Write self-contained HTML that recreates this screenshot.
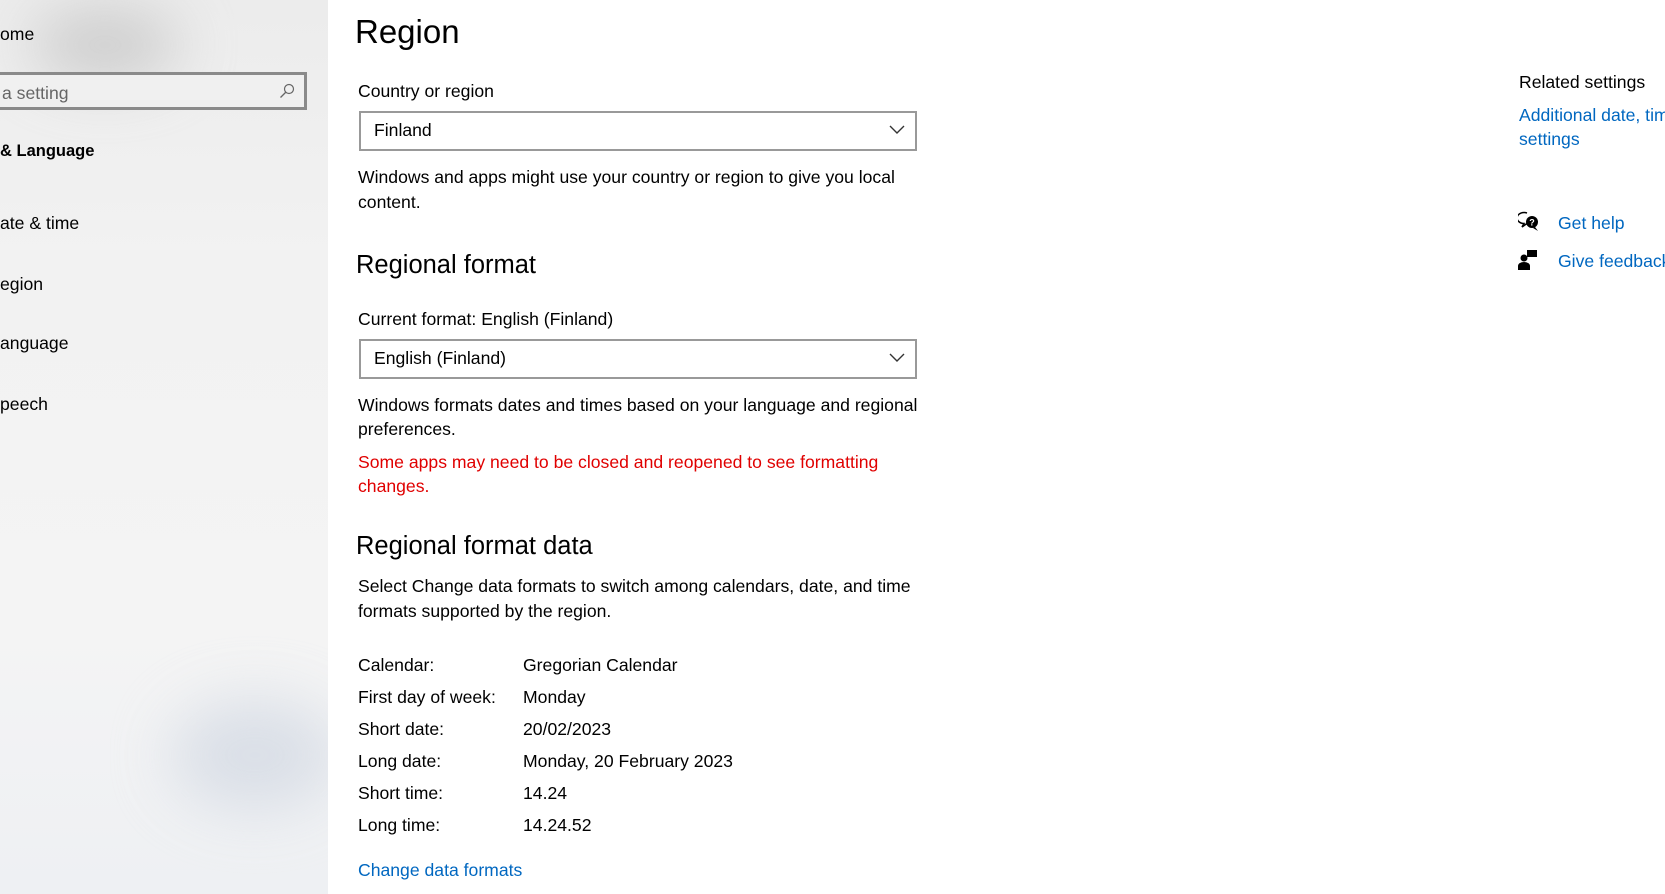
<!DOCTYPE html>
<html><head><meta charset="utf-8"><style>
*{margin:0;padding:0;box-sizing:border-box}
html,body{width:1665px;height:894px;overflow:hidden}
body{background:#fff;font-family:"Segoe UI","Liberation Sans",sans-serif;color:#000;position:relative;font-size:17.6px}
.a{position:absolute;white-space:nowrap;line-height:24px}
#side{position:absolute;left:0;top:0;width:328px;height:894px;background:linear-gradient(180deg,#ececec,#f2f2f2 30%,#f4f4f4 70%,#eef0f3);overflow:hidden}
.blob{position:absolute;border-radius:50%;filter:blur(30px)}
.dd{position:absolute;left:359px;width:558px;height:40px;border:2px solid #999;background:#fff}
.dd span{position:absolute;left:13px;top:7px;font-size:17.6px}
.dd svg{position:absolute;right:10px;top:12px}
.blue{color:#0067c0}
.red{color:#e00000}
</style></head><body>
<div id="side">
<div class="blob" style="left:30px;top:10px;width:150px;height:70px;background:#bdbdbd;opacity:.7"></div>
<div class="blob" style="left:170px;top:700px;width:170px;height:110px;background:#d4dae4;opacity:.8"></div>
<div class="a" style="left:0;top:22px;font-size:17.6px">ome</div>
<div style="position:absolute;left:-4px;top:72px;width:311px;height:38px;border:3px solid #8a8a8a;background:#f0f0f0"></div>
<div class="a" style="left:2px;top:81px;font-size:17.6px;color:#666">a setting</div>
<svg style="position:absolute;left:279px;top:83px" width="16" height="16" viewBox="0 0 16 16"><circle cx="10" cy="6" r="4.5" fill="none" stroke="#666" stroke-width="1.2"/><path d="M7 9L1.5 14.5" stroke="#666" stroke-width="1.3"/></svg>
<div class="a" style="left:0;top:139px;font-size:16.5px;font-weight:bold">&amp; Language</div>
<div class="a" style="left:0;top:211px">ate &amp; time</div>
<div class="a" style="left:0;top:272px">egion</div>
<div class="a" style="left:0;top:331px">anguage</div>
<div class="a" style="left:0;top:392px">peech</div>
</div>

<div class="a" style="left:355px;top:12px;font-size:33px;line-height:40px">Region</div>
<div class="a" style="left:358px;top:79px">Country or region</div>
<div class="dd" style="top:111px"><span>Finland</span><svg width="16" height="10" viewBox="0 0 16 10"><path d="M1 1l7 7 7-7" fill="none" stroke="#333" stroke-width="1.4"/></svg></div>
<div class="a" style="left:358px;top:165px">Windows and apps might use your country or region to give you local</div>
<div class="a" style="left:358px;top:190px">content.</div>
<div class="a" style="left:356px;top:250px;font-size:25.5px;line-height:30px">Regional format</div>
<div class="a" style="left:358px;top:307px">Current format: English (Finland)</div>
<div class="dd" style="top:339px"><span>English (Finland)</span><svg width="16" height="10" viewBox="0 0 16 10"><path d="M1 1l7 7 7-7" fill="none" stroke="#333" stroke-width="1.4"/></svg></div>
<div class="a" style="left:358px;top:393px">Windows formats dates and times based on your language and regional</div>
<div class="a" style="left:358px;top:417px">preferences.</div>
<div class="a red" style="left:358px;top:450px">Some apps may need to be closed and reopened to see formatting</div>
<div class="a red" style="left:358px;top:474px">changes.</div>
<div class="a" style="left:356px;top:531px;font-size:25.5px;line-height:30px">Regional format data</div>
<div class="a" style="left:358px;top:574px">Select Change data formats to switch among calendars, date, and time</div>
<div class="a" style="left:358px;top:599px">formats supported by the region.</div>
<div class="a" style="left:358px;top:653px">Calendar:</div><div class="a" style="left:523px;top:653px">Gregorian Calendar</div>
<div class="a" style="left:358px;top:685px">First day of week:</div><div class="a" style="left:523px;top:685px">Monday</div>
<div class="a" style="left:358px;top:717px">Short date:</div><div class="a" style="left:523px;top:717px">20/02/2023</div>
<div class="a" style="left:358px;top:749px">Long date:</div><div class="a" style="left:523px;top:749px">Monday, 20 February 2023</div>
<div class="a" style="left:358px;top:781px">Short time:</div><div class="a" style="left:523px;top:781px">14.24</div>
<div class="a" style="left:358px;top:813px">Long time:</div><div class="a" style="left:523px;top:813px">14.24.52</div>
<div class="a blue" style="left:358px;top:858px">Change data formats</div>

<div class="a" style="left:1519px;top:70px">Related settings</div>
<div class="a blue" style="left:1519px;top:103px">Additional date, time &amp; regional</div>
<div class="a blue" style="left:1519px;top:127px">settings</div>
<svg style="position:absolute;left:1518px;top:211px" width="22" height="22" viewBox="0 0 22 22"><path d="M9 2a7 5.5 0 1 0-3 10.5L4 16l5-3.5" fill="none" stroke="#000" stroke-width="1.5"/><circle cx="14" cy="11" r="6" fill="#000"/><path d="M17 16l3 4-5-3z" fill="#000"/><text x="14" y="14.5" font-size="9" fill="#fff" text-anchor="middle" font-family="Liberation Sans" font-weight="bold">?</text></svg>
<div class="a blue" style="left:1558px;top:211px">Get help</div>
<svg style="position:absolute;left:1518px;top:249px" width="22" height="22" viewBox="0 0 22 22"><rect x="9" y="1" width="10" height="7" fill="#000"/><circle cx="6" cy="9" r="3.5" fill="#000"/><path d="M0 21v-4a6 4 0 0 1 12 0v4z" fill="#000"/></svg>
<div class="a blue" style="left:1558px;top:249px">Give feedback</div>
</body></html>
